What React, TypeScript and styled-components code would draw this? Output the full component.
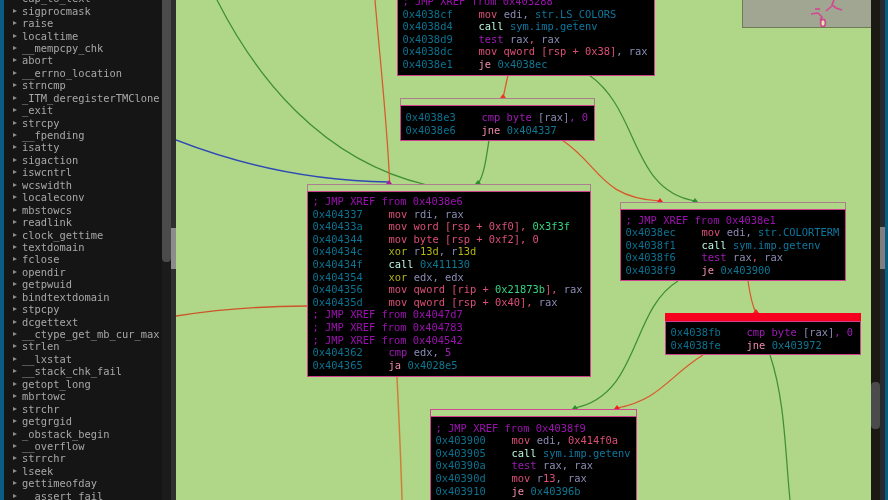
import React from "react";
import styled, { createGlobalStyle } from "styled-components";

const Global = createGlobalStyle`
  html, body { margin: 0; padding: 0; width: 888px; height: 500px; overflow: hidden; background: #151515; }
`;

const Root = styled.div`
  display: flex;
  width: 888px;
  height: 500px;
  overflow: hidden;
  font-family: "DejaVu Sans Mono", "Liberation Mono", monospace;
  font-size: 10.4px;
  filter: blur(0.35px);
`;

const EdgeStrip = styled.div`
  width: 4px;
  flex: none;
  background: #0b5c84;
`;

const Sidebar = styled.div`
  width: 158px;
  flex: none;
  background: #151515;
  overflow: hidden;
`;

const SymbolList = styled.ul`
  list-style: none;
  margin: -8px 0 0;
  padding: 0;
`;

const SymbolRow = styled.li`
  display: flex;
  align-items: center;
  height: 12.45px;
  color: #a8a8a8;
  white-space: pre;
`;

const Caret = styled.span`
  width: 0;
  height: 0;
  margin: 0 5px 0 9px;
  border-left: 4px solid #8d8d8d;
  border-top: 2px solid transparent;
  border-bottom: 2px solid transparent;
`;

const ScrollTrack = styled.div<{ $w: number; $bg: string }>`
  position: relative;
  width: ${(p) => p.$w}px;
  flex: none;
  background: ${(p) => p.$bg};
`;

const ScrollThumb = styled.div<{ $top: number; $h: number; $bg: string; $r?: number }>`
  position: absolute;
  left: 0;
  right: 0;
  top: ${(p) => p.$top}px;
  height: ${(p) => p.$h}px;
  background: ${(p) => p.$bg};
  border-radius: ${(p) => p.$r ?? 0}px;
`;

const Canvas = styled.div`
  position: relative;
  flex: none;
  width: 695px;
  height: 500px;
  background: #b0d788;
  overflow: hidden;
`;

const Edges = styled.svg`
  position: absolute;
  left: 0;
  top: 0;
`;

const Block = styled.div<{ $x: number; $y: number; $w: number }>`
  position: absolute;
  left: ${(p) => p.$x - 176}px;
  top: ${(p) => p.$y}px;
  width: ${(p) => p.$w}px;
  display: flex;
  flex-direction: column;
`;

const headBorder = { plain: "#ac7f8e", hot: "#f5001e", pink: "#cf4a92" };

const BlockHead = styled.div<{ $tone: keyof typeof headBorder }>`
  height: ${(p) => (p.$tone === "hot" ? 8 : 7)}px;
  box-sizing: border-box;
  background: ${(p) => (p.$tone === "hot" ? "#f5001e" : "#b0d788")};
  border: 1px solid ${(p) => headBorder[p.$tone]};
  border-bottom: 0;
`;

const BlockBody = styled.div<{ $h: number; $pad: number }>`
  height: ${(p) => p.$h}px;
  box-sizing: border-box;
  background: #000;
  border: 1px solid #d0408f;
  padding: ${(p) => p.$pad}px 0 0 4.6px;
  overflow: hidden;
`;

const AsmLine = styled.div`
  height: 12.6px;
  line-height: 12.6px;
  white-space: pre;
`;

const palette: Record<string, string> = {
  a: "#0b7391",
  c: "#9c10b0",
  m: "#dc4e78",
  r: "#8c8cb4",
  n: "#dc4e78",
  h: "#35d482",
  l: "#b8f4dc",
  p: "#a01ab6",
  x: "#b4b412",
  j: "#ee8aae",
  t: "#0e7892",
  s: "#0d78a0",
  w: "#e8e8ee",
};

const Tok = styled.span<{ $k: string }>`
  color: ${(p) => palette[p.$k]};
  display: ${(p) => (p.$k === "a" ? "inline-block" : "inline")};
  width: ${(p) => (p.$k === "a" ? "76px" : "auto")};
`;

const MiniMap = styled.div`
  position: absolute;
  right: 0;
  top: 0;
  width: 129px;
  height: 28px;
  box-sizing: border-box;
  background: #a0a692;
  border-left: 1px solid #6f7b55;
  border-bottom: 1px solid #6f7b55;
  overflow: hidden;
`;

const symbols = [
  "cap_to_text", "sigprocmask", "raise", "localtime", "__mempcpy_chk", "abort", "__errno_location",
  "strncmp", "_ITM_deregisterTMClone", "_exit", "strcpy", "__fpending", "isatty", "sigaction",
  "iswcntrl", "wcswidth", "localeconv", "mbstowcs", "readlink", "clock_gettime", "textdomain",
  "fclose", "opendir", "getpwuid", "bindtextdomain", "stpcpy", "dcgettext", "__ctype_get_mb_cur_max",
  "strlen", "__lxstat", "__stack_chk_fail", "getopt_long", "mbrtowc", "strchr", "getgrgid",
  "_obstack_begin", "__overflow", "strrchr", "lseek", "gettimeofday", "__assert_fail",
];

type BlockDef = {
  x: number; y: number; w: number; body: number; pad: number;
  tone: keyof typeof headBorder; lines: string[];
};

const blocks: BlockDef[] = [
  {
    x: 397, y: -19, w: 258, body: 88, pad: 6, tone: "plain",
    lines: [
      "c:; JMP XREF from 0x403288",
      "a:0x4038cf|m:mov |r:edi, |s:str.LS_COLORS",
      "a:0x4038d4|l:call |s:sym.imp.getenv",
      "a:0x4038d9|p:test |r:rax|m:, |r:rax",
      "a:0x4038dc|m:mov qword [rsp + 0x38]|r:, rax",
      "a:0x4038e1|j:je |t:0x4038ec",
    ],
  },
  {
    x: 400, y: 98, w: 195, body: 36, pad: 5, tone: "plain",
    lines: ["a:0x4038e3|p:cmp byte |r:[rax]|p:, 0", "a:0x4038e6|j:jne |t:0x404337"],
  },
  {
    x: 307, y: 184, w: 284, body: 186, pad: 3, tone: "plain",
    lines: [
      "c:; JMP XREF from 0x4038e6",
      "a:0x404337|m:mov |r:rdi, rax",
      "a:0x40433a|m:mov word [rsp + 0xf0], |h:0x3f3f",
      "a:0x404344|m:mov byte [rsp + 0xf2], 0",
      "a:0x40434c|x:xor |r:r|x:13d|r:, r|x:13d",
      "a:0x40434f|l:call |t:0x411130",
      "a:0x404354|x:xor |r:edx, edx",
      "a:0x404356|m:mov qword [rip + |h:0x21873b|m:], |r:rax",
      "a:0x40435d|m:mov qword [rsp + 0x40], |r:rax",
      "c:; JMP XREF from 0x4047d7",
      "c:; JMP XREF from 0x404783",
      "c:; JMP XREF from 0x404542",
      "a:0x404362|p:cmp |r:edx, |p:5",
      "a:0x404365|j:ja |t:0x4028e5",
    ],
  },
  {
    x: 620, y: 202, w: 226, body: 72, pad: 3.6, tone: "plain",
    lines: [
      "c:; JMP XREF from 0x4038e1",
      "a:0x4038ec|m:mov |r:edi, |s:str.COLORTERM",
      "a:0x4038f1|l:call |s:sym.imp.getenv",
      "a:0x4038f6|p:test |r:rax|m:, |r:rax",
      "a:0x4038f9|j:je |t:0x403900",
    ],
  },
  {
    x: 665, y: 313, w: 196, body: 34, pad: 4, tone: "hot",
    lines: ["a:0x4038fb|p:cmp byte |r:[rax]|p:, 0", "a:0x4038fe|j:jne |t:0x403972"],
  },
  {
    x: 430, y: 409, w: 207, body: 100, pad: 4.6, tone: "pink",
    lines: [
      "c:; JMP XREF from 0x4038f9",
      "a:0x403900|m:mov |r:edi, |m:0x414f0a",
      "a:0x403905|l:call |s:sym.imp.getenv",
      "a:0x40390a|p:test |r:rax, rax",
      "a:0x40390d|m:mov |r:r|m:13|r:, rax",
      "a:0x403910|j:je |t:0x40396b",
    ],
  },
];

const GREEN = "#3f8f33";
const RED = "#d9582c";
const paths: { d: string; c: string; w?: number }[] = [
  { d: "M217 0 C 255 75, 320 160, 427 185", c: GREEN },
  { d: "M176 140 C 240 165, 310 181, 389 182", c: "#2f49b4", w: 1.4 },
  { d: "M375 0 C 380 60, 388 130, 390 191", c: RED },
  { d: "M176 316 C 220 309, 260 306, 308 306", c: "#cc5428", w: 1.4 },
  { d: "M397 377 C 399 420, 401 460, 402 500", c: "#cf7f3c", w: 1.5 },
  { d: "M508 75 L 503 98", c: RED },
  { d: "M589 75 C 640 110, 630 190, 695 201", c: GREEN },
  { d: "M562 140 C 600 165, 600 198, 660 201", c: RED },
  { d: "M489 140 C 486 160, 484 175, 478 184", c: GREEN },
  { d: "M748 281 C 750 295, 752 305, 756 313", c: RED },
  { d: "M678 281 C 630 310, 640 395, 575 408", c: GREEN },
  { d: "M703 355 C 670 375, 660 400, 617 408", c: RED },
  { d: "M770 355 C 785 400, 785 450, 790 500", c: GREEN },
];

const arrows: { x: number; y: number; c: string }[] = [
  { x: 389, y: 184, c: "#a8209a" },
  { x: 503, y: 98, c: "#ee3322" },
  { x: 478, y: 184, c: "#2a8f30" },
  { x: 660, y: 202, c: "#ee2222" },
  { x: 695, y: 202, c: "#2a8f30" },
  { x: 756, y: 313, c: "#ee2222" },
  { x: 575, y: 409, c: "#2a8f30" },
  { x: 617, y: 409, c: "#ee2222" },
];

export default function App() {
  return (
    <Root>
      <Global />
      <EdgeStrip />
      <Sidebar>
        <SymbolList>
          {symbols.map((s) => (
            <SymbolRow key={s}>
              <Caret />
              {s}
            </SymbolRow>
          ))}
        </SymbolList>
      </Sidebar>
      <ScrollTrack $w={9} $bg="#1b1b1b">
        <ScrollThumb $top={-10} $h={272} $bg="#4b4b4b" $r={4} />
      </ScrollTrack>
      <ScrollTrack $w={5} $bg="#2f2f2f">
        <ScrollThumb $top={228} $h={41} $bg="#8c8c8c" />
      </ScrollTrack>
      <Canvas>
        <Edges width={695} height={500} viewBox="176 0 695 500" fill="none">
          {paths.map((p) => (
            <path key={p.d} d={p.d} stroke={p.c} strokeWidth={p.w ?? 1.25} />
          ))}
        </Edges>
        {blocks.map((b) => (
          <Block key={b.x} $x={b.x} $y={b.y} $w={b.w}>
            <BlockHead $tone={b.tone} />
            <BlockBody $h={b.body} $pad={b.pad}>
              {b.lines.map((l, i) => (
                <AsmLine key={i}>
                  {l.split("|").map((seg, j) => (
                    <Tok key={j} $k={seg[0]}>
                      {seg.slice(2)}
                    </Tok>
                  ))}
                </AsmLine>
              ))}
            </BlockBody>
          </Block>
        ))}
        <Edges width={695} height={500} viewBox="176 0 695 500" fill="none">
          {arrows.map((a) => (
            <path key={a.x} d={`M${a.x - 3} ${a.y} L${a.x + 3} ${a.y} L${a.x} ${a.y - 4} Z`} fill={a.c} />
          ))}
        </Edges>
        <MiniMap>
          <svg width={128} height={27} viewBox="743 0 128 27" fill="none" stroke="#d3478f" strokeWidth={1.6}>
            <path d="M834 0 L832 5 L836 8 L842 10" />
            <path d="M832 6 L826 11" />
            <path d="M815 9 L820 9" />
            <path d="M811 14 L818 13 L822 17 L820 20" />
            <ellipse cx={823} cy={23} rx={2.4} ry={3.6} fill="#dfe8b0" />
          </svg>
        </MiniMap>
      </Canvas>
      <ScrollTrack $w={9} $bg="#1c1814">
        <ScrollThumb $top={382} $h={47} $bg="#4b4b4b" $r={4} />
      </ScrollTrack>
      <ScrollTrack $w={5} $bg="#262b2e">
        <ScrollThumb $top={227} $h={42} $bg="#7f7f7f" />
      </ScrollTrack>
      <EdgeStrip />
    </Root>
  );
}
